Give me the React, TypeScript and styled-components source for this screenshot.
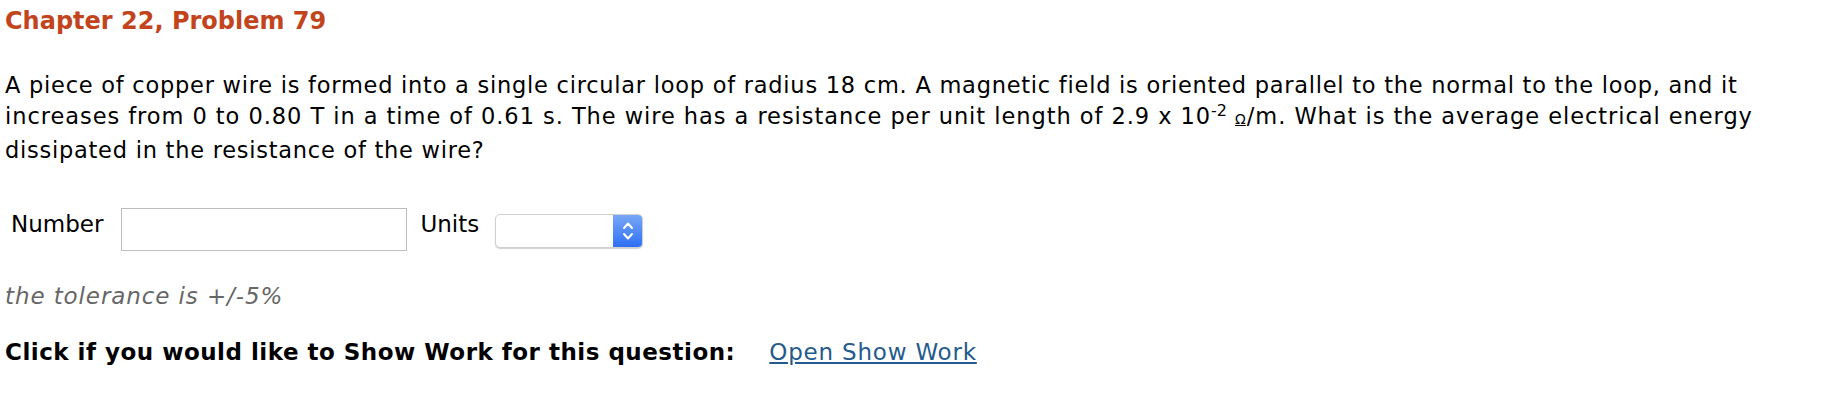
import React from 'react';
import styled, { createGlobalStyle } from 'styled-components';

const GlobalStyle = createGlobalStyle`
  html, body {
    margin: 0;
    padding: 0;
    background: #fff;
  }
  body {
    font-family: "DejaVu Sans", Verdana, sans-serif;
    color: #000;
  }
`;

const Page = styled.div`
  width: 1830px;
  box-sizing: border-box;
  padding: 7px 5px 0;
`;

const Title = styled.h2`
  margin: 0;
  font-size: 24px;
  line-height: 29px;
  font-weight: bold;
  color: #c2441c;
`;

const Question = styled.p`
  margin: 34px 0 0;
  font-size: 22.5px;
  letter-spacing: 0.75px;
  line-height: 31px;
  white-space: nowrap;

  sup {
    font-size: 16px;
    letter-spacing: 0;
    line-height: 0;
  }
`;

// one visual line of the question; spacing tweaked per line to match the original wrap
const Line = styled.span<{ $spacing?: number }>`
  letter-spacing: ${(p) => (p.$spacing ?? 0.75)}px;
`;

const Ohm = styled.span`
  font-size: 14px;
  letter-spacing: 0;
  margin-right: 1px;
  text-decoration: underline;
`;

const AnswerRow = styled.div`
  display: flex;
  align-items: flex-start;
  margin-top: 42px;
`;

const Label = styled.span<{ $first?: boolean }>`
  font-size: 23px;
  line-height: 26px;
  padding: 3px 0 0;
  margin: 0 ${(p) => (p.$first ? '18px' : '16px')} 0 ${(p) => (p.$first ? '6px' : '13px')};
`;

const NumberInput = styled.input`
  width: 286px;
  height: 43px;
  box-sizing: border-box;
  border: 1px solid #bdbdbd;
  margin: 0;
  padding: 0 6px;
  font: inherit;
`;

const Select = styled.div`
  display: flex;
  width: 148px;
  height: 34px;
  margin-top: 6px;
  box-sizing: border-box;
  border: 1px solid #cfcfcf;
  border-radius: 5px;
  background: #fff;
  box-shadow: 0 1px 1px rgba(0, 0, 0, 0.18);
  overflow: hidden;
`;

const SelectValue = styled.div`
  flex: 1;
`;

const SelectArrow = styled.div`
  width: 29px;
  display: flex;
  align-items: center;
  justify-content: center;
  background: linear-gradient(#78a7f7, #2f6ff5);
`;

const Tolerance = styled.p`
  margin: 30px 0 0;
  font-size: 23px;
  letter-spacing: 0.9px;
  line-height: 31px;
  font-style: italic;
  color: #666;
`;

const ShowWork = styled.p`
  margin: 25px 0 0;
  font-size: 23px;
  line-height: 31px;
  display: flex;
  align-items: baseline;
  gap: 34px;
`;

const Strong = styled.strong`
  font-weight: bold;
  letter-spacing: 0.5px;
`;

const Link = styled.a`
  color: #245a8c;
  text-decoration: underline;
  letter-spacing: 0.8px;
`;

export default function App() {
  return (
    <>
      <GlobalStyle />
      <Page>
        <Title>Chapter 22, Problem 79</Title>
        <Question>
          <Line>
            A piece of copper wire is formed into a single circular loop of radius 18 cm. A magnetic field is oriented parallel to the normal to the loop, and it
          </Line>
          <br />
          <Line $spacing={0.95}>
            increases from 0 to 0.80 T in a time of 0.61 s. The wire has a resistance per unit length of 2.9 x 10<sup>-2</sup>{' '}
            <Ohm>Ω</Ohm>/m. What is the average electrical energy
          </Line>
          <br />
          <Line>dissipated in the resistance of the wire?</Line>
        </Question>
        <AnswerRow>
          <Label $first>Number</Label>
          <NumberInput type="text" />
          <Label>Units</Label>
          <Select>
            <SelectValue />
            <SelectArrow>
              <svg width="12" height="22" viewBox="0 0 12 22" fill="none" stroke="#fff" strokeWidth="2" strokeLinecap="round" strokeLinejoin="round">
                <path d="M2 8 L6 3.5 L10 8" />
                <path d="M2 14 L6 18.5 L10 14" />
              </svg>
            </SelectArrow>
          </Select>
        </AnswerRow>
        <Tolerance>the tolerance is +/-5%</Tolerance>
        <ShowWork>
          <Strong>Click if you would like to Show Work for this question:</Strong>
          <Link href="#">Open Show Work</Link>
        </ShowWork>
      </Page>
    </>
  );
}
